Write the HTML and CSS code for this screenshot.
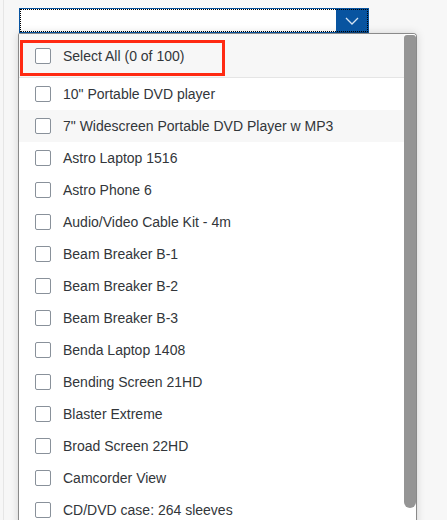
FILE: index.html
```html
<!DOCTYPE html>
<html>
<head>
<meta charset="utf-8">
<link rel="stylesheet" href="styles.css">
</head>
<body>
<div class="page">
  <div class="combo">
    <div class="combo-input"></div>
    <div class="combo-button">
      <svg width="14" height="8" viewBox="0 0 14 8"><path d="M1 1 L7 7 L13 1" fill="none" stroke="#d6e4f2" stroke-width="1.3"/></svg>
    </div>
  </div>
  <div class="popover">
    <div class="list">
      <div class="row select-all">
        <span class="check"></span><span class="label">Select All (0 of 100)</span>
        <span class="highlight"></span>
      </div>
      <div class="row"><span class="check"></span><span class="label">10" Portable DVD player</span></div>
      <div class="row hover"><span class="check"></span><span class="label">7" Widescreen Portable DVD Player w MP3</span></div>
      <div class="row"><span class="check"></span><span class="label">Astro Laptop 1516</span></div>
      <div class="row"><span class="check"></span><span class="label">Astro Phone 6</span></div>
      <div class="row"><span class="check"></span><span class="label">Audio/Video Cable Kit - 4m</span></div>
      <div class="row"><span class="check"></span><span class="label">Beam Breaker B-1</span></div>
      <div class="row"><span class="check"></span><span class="label">Beam Breaker B-2</span></div>
      <div class="row"><span class="check"></span><span class="label">Beam Breaker B-3</span></div>
      <div class="row"><span class="check"></span><span class="label">Benda Laptop 1408</span></div>
      <div class="row"><span class="check"></span><span class="label">Bending Screen 21HD</span></div>
      <div class="row"><span class="check"></span><span class="label">Blaster Extreme</span></div>
      <div class="row"><span class="check"></span><span class="label">Broad Screen 22HD</span></div>
      <div class="row"><span class="check"></span><span class="label">Camcorder View</span></div>
      <div class="row"><span class="check"></span><span class="label">CD/DVD case: 264 sleeves</span></div>
    </div>
    <div class="scrollbar"><div class="thumb"></div></div>
  </div>
</div>
</body>
</html>
```

FILE: styles.css
```css
html, body {
  margin: 0;
  padding: 0;
  height: 520px;
  overflow: hidden;
  background: #f7f7f7;
}
.page {
  height: 520px;
  box-sizing: border-box;
  margin-left: 3px;
  border-left: 1px solid #e6e6e6;
  padding: 8px 0 0 14px;
  font-family: "Liberation Sans", Arial, sans-serif;
  font-size: 14px;
  color: #32363a;
}
.combo {
  margin-left: 1px;
  width: 350px;
  height: 25px;
  box-sizing: border-box;
  border: 1px solid #0854a0;
  outline: 1px dotted #000;
  outline-offset: -2px;
  background: #fff;
  display: flex;
}
.combo-input {
  flex: 1;
}
.combo-button {
  width: 32px;
  background: #0854a0;
  display: flex;
  align-items: center;
  justify-content: center;
  border-bottom: 1px solid #063d75;
  margin-bottom: -1px;
}
.popover {
  width: 399px;
  box-sizing: border-box;
  border: 1px solid #8a8a8a;
  border-bottom: none;
  border-radius: 2px 4px 0 0;
  background: #fff;
  box-shadow: 0 0 8px rgba(0, 0, 0, 0.15);
  display: flex;
  height: 500px;
  overflow: hidden;
}
.list {
  flex: 1;
}
.row {
  height: 32px;
  display: flex;
  align-items: center;
  padding-left: 16px;
  gap: 12px;
  background: #fff;
}
.row.hover {
  background: #f7f7f7;
}
.row.select-all {
  position: relative;
  height: 43px;
  background: #f7f7f7;
  border-bottom: 1px solid #e5e5e5;
}
.check {
  width: 16px;
  height: 16px;
  box-sizing: border-box;
  border: 1px solid #89919a;
  border-radius: 2px;
  background: #fff;
  flex: none;
}
.label {
  white-space: nowrap;
}
.highlight {
  position: absolute;
  left: 1px;
  top: 6px;
  width: 205px;
  height: 36px;
  box-sizing: border-box;
  border: 3px solid #ff2a12;
}
.scrollbar {
  width: 12px;
  flex: none;
  background: #fff;
  padding-top: 1px;
}
.thumb {
  height: 473px;
  background: #959595;
  border-radius: 3px 3px 6px 6px;
}
```
